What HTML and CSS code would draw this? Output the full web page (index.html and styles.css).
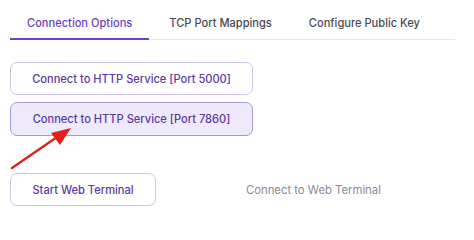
FILE: index.html
```html
<!DOCTYPE html>
<html>
<head>
<meta charset="utf-8">
<link rel="stylesheet" href="styles.css">
</head>
<body>
<div class="page">
  <div class="tabs">
    <div class="tab active">Connection Options</div>
    <div class="tab">TCP Port Mappings</div>
    <div class="tab">Configure Public Key</div>
  </div>
  <div class="content">
    <button class="btn">Connect to HTTP Service [Port 5000]</button>
    <button class="btn selected">Connect to HTTP Service [Port 7860]</button>
    <div class="row">
      <button class="btn">Start Web Terminal</button>
      <span class="link">Connect to Web Terminal</span>
    </div>
  </div>
  <svg class="arrow" width="70" height="50" viewBox="0 0 70 50">
    <line x1="3" y1="45" x2="48" y2="14" stroke="#e3201b" stroke-width="2.4" stroke-linecap="round"/>
    <polygon points="62,5 42,10 51,22" fill="#e3201b"/>
  </svg>
</div>
</body>
</html>
```
FILE: styles.css
```css
* { box-sizing: border-box; }
html, body { margin: 0; padding: 0; background: #ffffff; }
body { font-family: Inter, "Noto Sans", sans-serif; }
.page {
  position: relative;
  width: 474px;
  height: 240px;
  padding: 10px 19px 0 10px;
}
.tabs {
  display: flex;
  gap: 3px;
  height: 30px;
  border-bottom: 1px solid #e7e7ec;
}
.tab {
  display: flex;
  align-items: center;
  white-space: nowrap;
  padding: 0 17px 2px 17px;
  font-size: 11.1px;
  font-weight: 500;
  color: #4a4a55;
  margin-bottom: -1px;
  border-bottom: 2px solid transparent;
}
.tab.active {
  color: #6a43c3;
  border-bottom-color: #6a43c3;
}
.content {
  display: flex;
  flex-direction: column;
  align-items: flex-start;
  gap: 7px;
  padding-top: 22px;
}
.btn {
  font-family: Inter, "Noto Sans", sans-serif;
  font-size: 11.1px;
  font-weight: 500;
  white-space: nowrap;
  color: #5a38a8;
  background: #ffffff;
  border: 1px solid #cfc3ea;
  border-radius: 7px;
  height: 33px;
  padding: 0;
  width: 243px;
}
.btn.selected {
  background: #efeafb;
  border-color: #ab98d8;
  height: 34px;
}
.row {
  display: flex;
  align-items: center;
  margin-top: 30px;
}
.row .btn { width: 146px; }
.link {
  margin-left: 90px;
  font-size: 11.3px;
  white-space: nowrap;
  color: #8a8a96;
}
.arrow {
  position: absolute;
  left: 9px;
  top: 123px;
}
```
